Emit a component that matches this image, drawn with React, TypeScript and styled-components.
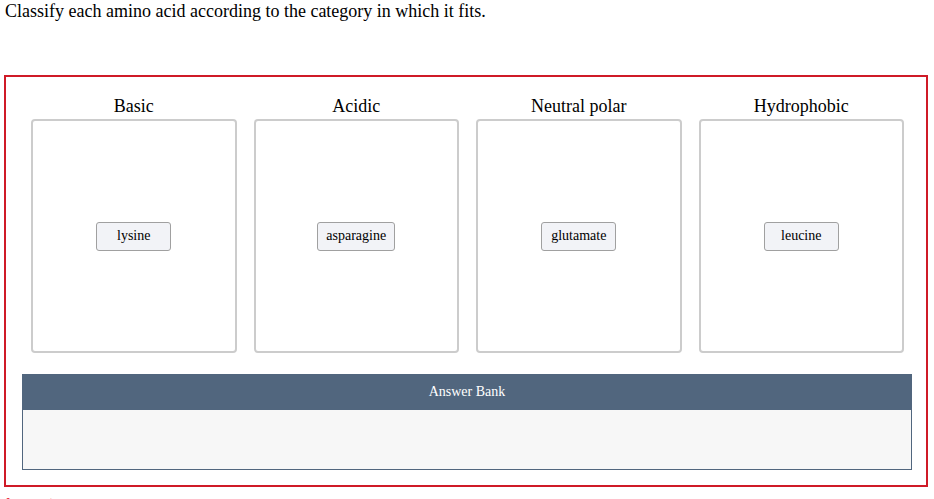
import React from 'react';
import styled, { createGlobalStyle } from 'styled-components';

const GlobalStyle = createGlobalStyle`
  body {
    margin: 0;
    background: #fff;
    font-family: "Liberation Serif", "Times New Roman", serif;
    color: #000;
  }
`;

const Page = styled.div`
  padding: 0 6px 0 4px;
`;

const Prompt = styled.p`
  margin: 0;
  padding: 1px 0 0 1px;
  font-size: 18px;
  line-height: 21px;
  height: 75px;
  box-sizing: border-box;
`;

const Question = styled.div`
  border: 2px solid #cf1a27;
  padding: 18px 14px 15px 16px;
`;

const Categories = styled.div`
  display: flex;
  gap: 17px;
  padding: 0 8px 0 9px;
`;

const Category = styled.div`
  flex: 1;
  display: flex;
  flex-direction: column;
`;

const Heading = styled.div`
  text-align: center;
  font-size: 18px;
  line-height: 22px;
  margin-bottom: 2px;
`;

const DropZone = styled.div`
  height: 234px;
  box-sizing: border-box;
  border: 2px solid #cccccc;
  border-radius: 4px;
  display: flex;
  align-items: center;
  justify-content: center;
`;

const Chip = styled.div`
  min-width: 75px;
  height: 29px;
  box-sizing: border-box;
  padding: 0 8px;
  border: 1px solid #a0a0a0;
  border-radius: 3px;
  background: #f2f3f7;
  font-size: 14px;
  display: flex;
  align-items: center;
  justify-content: center;
`;

const Bank = styled.div`
  margin-top: 21px;
`;

const BankHeader = styled.div`
  height: 36px;
  background: #51667e;
  color: #fff;
  font-size: 14px;
  display: flex;
  align-items: center;
  justify-content: center;
`;

const BankBody = styled.div`
  height: 60px;
  box-sizing: border-box;
  background: #f7f7f7;
  border: 1px solid #51667e;
  border-top: none;
`;

const Status = styled.div`
  color: #e8101b;
  font-size: 13px;
  margin-top: 7px;
  padding-left: 2px;
`;

const categories = [
  { name: 'Basic', item: 'lysine' },
  { name: 'Acidic', item: 'asparagine' },
  { name: 'Neutral polar', item: 'glutamate' },
  { name: 'Hydrophobic', item: 'leucine' },
];

export default function App() {
  return (
    <Page>
      <GlobalStyle />
      <Prompt>Classify each amino acid according to the category in which it fits.</Prompt>
      <Question>
        <Categories>
          {categories.map((c) => (
            <Category key={c.name}>
              <Heading>{c.name}</Heading>
              <DropZone>
                <Chip>{c.item}</Chip>
              </DropZone>
            </Category>
          ))}
        </Categories>
        <Bank>
          <BankHeader>Answer Bank</BankHeader>
          <BankBody />
        </Bank>
      </Question>
      <Status>Incorrect</Status>
    </Page>
  );
}
